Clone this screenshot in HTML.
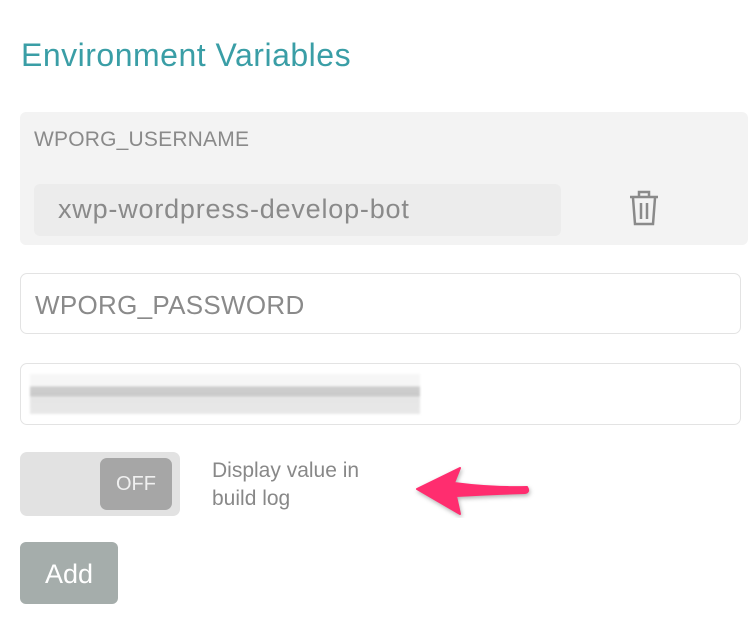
<!DOCTYPE html><html><head><style>
body{margin:0;width:756px;height:634px;background:#fff;font-family:"Liberation Sans",sans-serif;position:relative;overflow:hidden}
.a{position:absolute}
</style></head><body>
<div class="a" style="left:21px;top:37px;font-size:32px;letter-spacing:0.5px;color:#3a9ea6">Environment Variables</div>
<div class="a" style="left:20px;top:112px;width:728px;height:133px;background:#f3f3f3;border-radius:6px"></div>
<div class="a" style="left:34px;top:128px;font-size:21px;color:#8a8a8a;letter-spacing:0.2px">WPORG_USERNAME</div>
<div class="a" style="left:34px;top:184px;width:527px;height:52px;background:#ececec;border-radius:6px"></div>
<div class="a" style="left:58px;top:194px;font-size:27px;color:#8a8a8a;letter-spacing:0.8px">xwp-wordpress-develop-bot</div>
<svg class="a" style="left:628px;top:188px" width="32" height="40" viewBox="0 0 32 40"><g fill="none" stroke="#8a8a8a" stroke-width="2.5"><path d="M2 9h28M11 9V4h10v5M5 10l2 26h18l2-26M13 15v16M19 15v16"/></g></svg>
<div class="a" style="left:20px;top:273px;width:719px;height:59px;border:1.5px solid #e3e3e3;border-radius:7px"></div>
<div class="a" style="left:35px;top:290px;font-size:26px;color:#8a8a8a;letter-spacing:0.3px">WPORG_PASSWORD</div>
<div class="a" style="left:20px;top:363px;width:719px;height:60px;border:1.5px solid #e3e3e3;border-radius:7px"></div>
<div class="a" style="left:30px;top:374px;width:390px;height:40px;background:linear-gradient(#f6f6f6 0,#f6f6f6 30%,#cfcfcf 32%,#c9c9c9 55%,#e6e6e6 57%,#e8e8e8 100%);filter:blur(1px)"></div>
<div class="a" style="left:20px;top:452px;width:160px;height:64px;background:#e2e2e2;border-radius:7px"></div>
<div class="a" style="left:100px;top:458px;width:72px;height:52px;background:#a6a6a6;border-radius:7px;color:#f0f0f0;font-size:20px;line-height:52px;text-align:center">OFF</div>
<div class="a" style="left:212px;top:457px;font-size:21px;line-height:28px;color:#888">Display value in<br>build log</div>
<svg class="a" style="left:412px;top:462px" width="125" height="56" viewBox="0 0 125 56"><path d="M5 27 L48 6 L42 21 Q80 26 115 25 Q118 30 113 31 Q80 32 44 34 L48 52 Z" fill="#ff2d6f" stroke="#ff2d6f" stroke-linejoin="round" stroke-width="2" style="filter:drop-shadow(1px 2px 2px rgba(0,0,0,.3))"/></svg>
<div class="a" style="left:20px;top:542px;width:98px;height:62px;background:#a5adab;border-radius:6px;color:#fff;font-size:27px;line-height:64px;text-align:center">Add</div>
</body></html>
